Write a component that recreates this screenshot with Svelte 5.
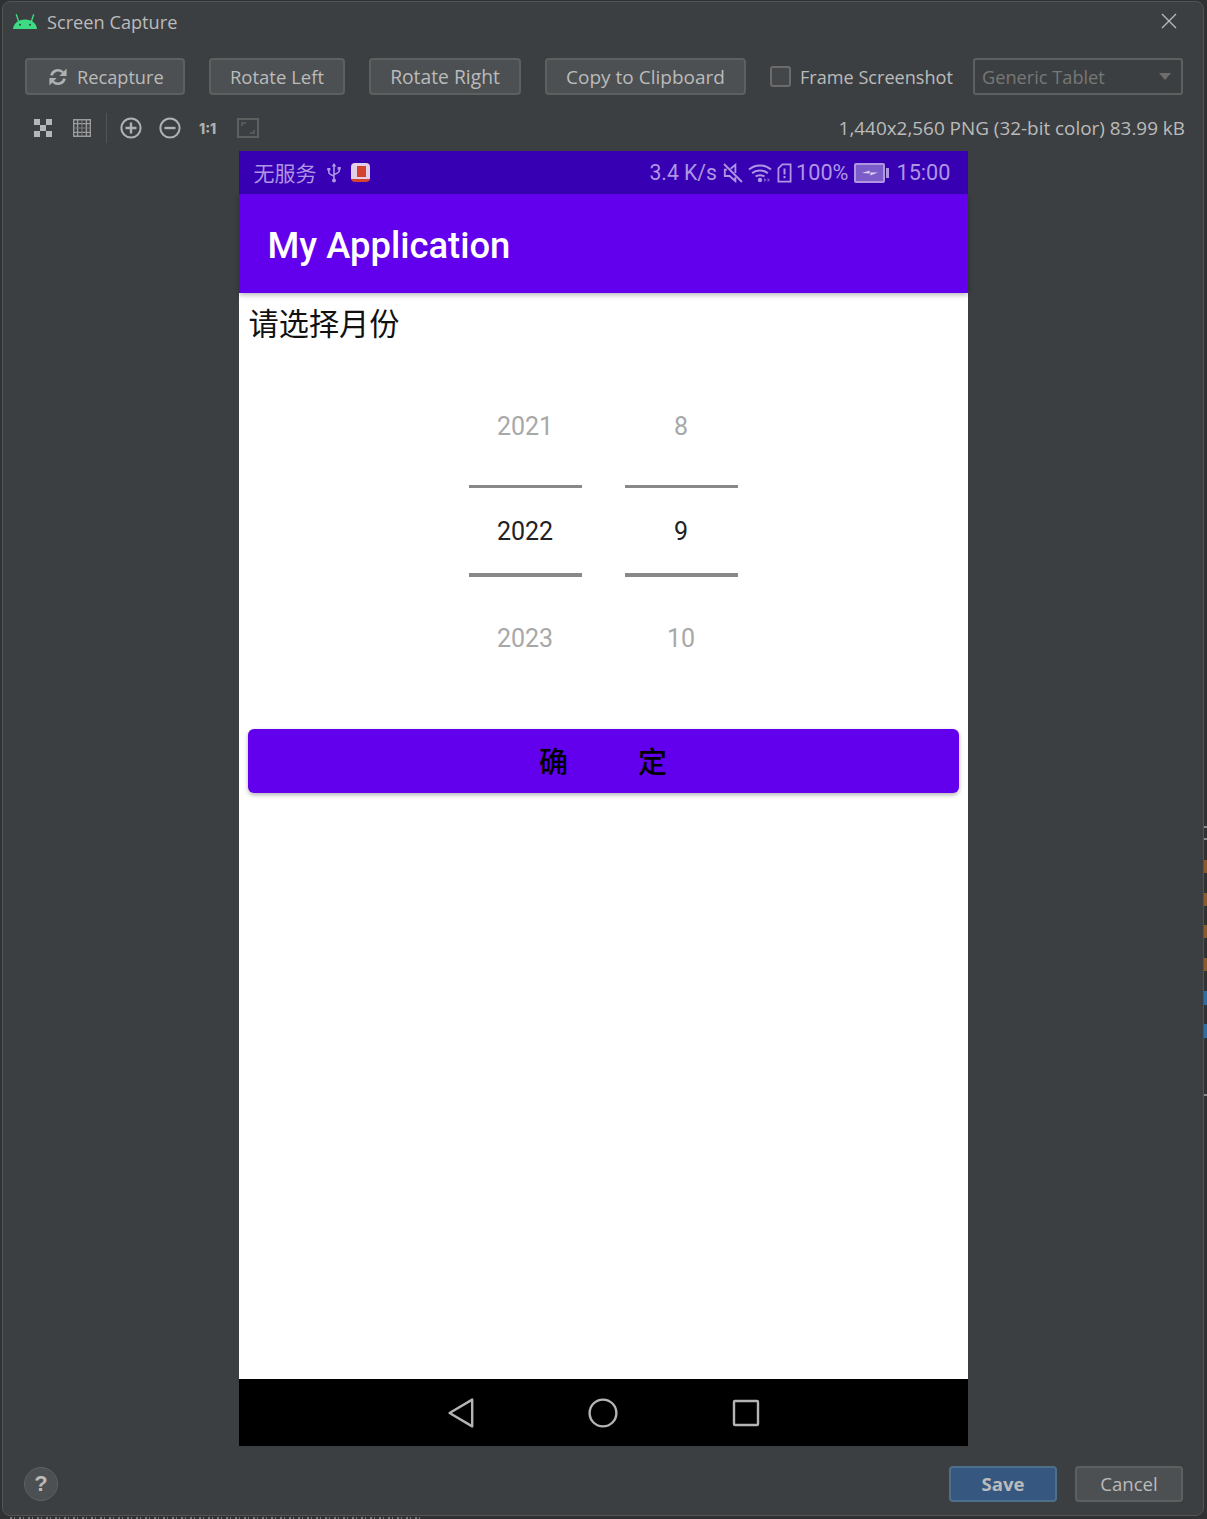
<script>
	const actions = [
		{ label: 'Rotate Left', cls: 'left' },
		{ label: 'Rotate Right', cls: 'right' },
		{ label: 'Copy to Clipboard', cls: 'copy' }
	];
	const years = ['2021', '2022', '2023'];
	const months = ['8', '9', '10'];
	const columns = [years, months];

	// bits of the windows behind the dialog that show along its right edge
	const edgeMarks = [
		{ top: 826, h: 2, color: '#8a8a8a' },
		{ top: 838, h: 2, color: '#8a8a8a' },
		{ top: 860, h: 13, color: '#8a5a2a' },
		{ top: 893, h: 13, color: '#8a5a2a' },
		{ top: 925, h: 13, color: '#8a5a2a' },
		{ top: 958, h: 13, color: '#8a5a2a' },
		{ top: 991, h: 14, color: '#2f6ea5' },
		{ top: 1024, h: 14, color: '#2f6ea5' },
		{ top: 1094, h: 2, color: '#8a8a8a' }
	];
</script>

<div class="desktop">
	<div class="dialog">
		<header class="titlebar">
			<svg class="android" viewBox="0 0 24 15" width="24" height="15" aria-hidden="true">
				<path fill="#3ddc84" d="M0 15C.4 9.6 5 5.4 12 5.4S23.6 9.6 24 15Z" />
				<path stroke="#3ddc84" stroke-width="1.4" stroke-linecap="round" d="M5.6 7.4 3.4.8M18.4 7.4 20.6.8" />
				<circle cx="7" cy="10.7" r="1" fill="#3c3f41" />
				<circle cx="17" cy="10.7" r="1" fill="#3c3f41" />
			</svg>
			<span class="title">Screen Capture</span>
			<svg class="close" viewBox="0 0 16 16" width="16" height="16" aria-hidden="true">
				<path stroke="#bbbbbb" stroke-width="1.3" d="M1 1 15 15M15 1 1 15" />
			</svg>
		</header>

		<div class="toolbar">
			<button type="button" class="btn recapture">
				<svg viewBox="0 0 20 20" width="20" height="20" aria-hidden="true">
					<path fill="none" stroke="#afb1b3" stroke-width="2.6" d="M3.4 8.4A6.9 6.9 0 0 1 15 5.4M16.6 11.6A6.9 6.9 0 0 1 5 14.6" />
					<path fill="#afb1b3" d="M18.6 1.6V9H11.4ZM1.4 18.4V11H8.6Z" />
				</svg>
				Recapture
			</button>
			{#each actions as action}
				<button type="button" class="btn {action.cls}">{action.label}</button>
			{/each}
			<span class="checkbox"></span>
			<span class="check-label">Frame Screenshot</span>
			<div class="select">
				<span>Generic Tablet</span>
				<i class="caret"></i>
			</div>
		</div>

		<div class="iconbar">
			<svg viewBox="0 0 18 18" width="18" height="18" aria-hidden="true">
				<path fill="#b4b6b8" d="M0 0H6V6H0ZM12 0H18V6H12ZM6 6H12V12H6ZM0 12H6V18H0ZM12 12H18V18H12Z" />
			</svg>
			<svg class="grid" viewBox="0 0 18 18" width="18" height="18" aria-hidden="true">
				<path fill="none" stroke="#9a9c9e" stroke-width="1.4" d="M.7.7H17.3V17.3H.7ZM.7 4.6H17.3M.7 13.4H17.3M4.6.7V17.3M13.4.7V17.3" />
				<path fill="none" stroke="#7c7e80" stroke-width="1" d="M.7 9H17.3M9 .7V17.3" />
			</svg>
			<span class="divider"></span>
			<svg viewBox="0 0 22 22" width="22" height="22" aria-hidden="true">
				<circle cx="11" cy="11" r="9.6" fill="none" stroke="#afb1b3" stroke-width="2" />
				<path stroke="#afb1b3" stroke-width="2.4" d="M5.5 11H16.5M11 5.5V16.5" />
			</svg>
			<svg viewBox="0 0 22 22" width="22" height="22" aria-hidden="true">
				<circle cx="11" cy="11" r="9.6" fill="none" stroke="#afb1b3" stroke-width="2" />
				<path stroke="#afb1b3" stroke-width="2.4" d="M5.5 11H16.5" />
			</svg>
			<span class="actual">1:1</span>
			<svg class="fit" viewBox="0 0 22 20" width="22" height="20" aria-hidden="true">
				<path fill="none" stroke="#5e6060" stroke-width="2" d="M1 1H21V19H1Z" />
				<path fill="none" stroke="#5e6060" stroke-width="1.4" d="M5 8V5H9M17 12V15H13" />
			</svg>
			<span class="info">1,440x2,560 PNG (32-bit color) 83.99 kB</span>
		</div>

		<div class="stage">
			<div class="phone">
				<div class="statusbar">
					<span class="carrier">无服务</span>
					<svg viewBox="0 0 14 20" width="14" height="20" aria-hidden="true">
						<path fill="none" stroke="#ae96e4" stroke-width="1.6" d="M7 2V18M1.8 7V9.5C1.8 11 3 11.5 7 13M12.2 6V8C12.2 9.5 11 10 7 11.5" />
						<path fill="#ae96e4" d="M7 0 9.4 3.4H4.6ZM.2 5H3.4V7.4H.2ZM10.6 4H13.8V6.4H10.6Z" />
						<circle cx="7" cy="17.6" r="2" fill="#ae96e4" />
					</svg>
					<span class="appicon"><i></i></span>
					<span class="spring"></span>
					<span class="speed">3.4 K/s</span>
					<svg class="mute" viewBox="0 0 20 20" width="20" height="20" aria-hidden="true">
						<path fill="none" stroke="#ae96e4" stroke-width="1.8" d="M1 1 19 19M12.4 10V1.8L7.6 5.8M11.4 14.6 12.4 15.6V18.2L6.6 13H1.8V6.6H4" />
					</svg>
					<svg class="wifi" viewBox="0 0 25 20" width="25" height="20" aria-hidden="true">
						<path fill="none" stroke="#ae96e4" stroke-width="2" d="M1 6.6C7 1 17 1 23 6.6M4.2 10.2C8.2 6.6 15.8 6.6 19.8 10.2M7.6 13.6C9.8 11.8 14.2 11.8 16.4 13.6" />
						<circle cx="12" cy="17" r="2.2" fill="#ae96e4" />
						<path fill="#7c5cc8" d="M16 15V19L18.6 17ZM19.6 15V19L22.2 17Z" />
					</svg>
					<svg class="sim" viewBox="0 0 15 20" width="15" height="20" aria-hidden="true">
						<path fill="none" stroke="#ae96e4" stroke-width="1.8" d="M5.4 1.4H13.6V18.6H1.4V5.4Z" />
						<path stroke="#ae96e4" stroke-width="2" d="M7.5 5.4V11.6M7.5 13V15.2" />
					</svg>
					<span class="pct">100%</span>
					<span class="battery">
						<svg viewBox="0 0 16 6" width="16" height="6" aria-hidden="true">
							<path fill="#e0d6f5" d="M0 3 8 .4 7 2.4H16L8 5.6 9 3.4Z" />
						</svg>
					</span>
					<span class="cap"></span>
					<span class="clock">15:00</span>
				</div>
				<div class="appbar">My Application</div>
				<div class="content">
					<div class="prompt">请选择月份</div>
					<div class="picker">
						{#each columns as col}
							<div class="wheel">
								<div class="cell dim top">{col[0]}</div>
								<div class="line"></div>
								<div class="cell current">{col[1]}</div>
								<div class="line thick"></div>
								<div class="cell dim bottom">{col[2]}</div>
							</div>
						{/each}
					</div>
					<div class="confirm"><span>确</span><span>定</span></div>
				</div>
				<div class="navbar">
					<svg viewBox="0 0 26 30" width="26" height="30" aria-hidden="true">
						<path fill="none" stroke="#b4b4b4" stroke-width="2.4" stroke-linejoin="round" d="M24.2 1.6V28.4L1.6 15Z" />
					</svg>
					<svg viewBox="0 0 30 30" width="30" height="30" aria-hidden="true">
						<circle cx="15" cy="15" r="13.4" fill="none" stroke="#b4b4b4" stroke-width="2.4" />
					</svg>
					<svg viewBox="0 0 28 28" width="28" height="28" aria-hidden="true">
						<rect x="2" y="2" width="24" height="24" rx="1" fill="none" stroke="#b4b4b4" stroke-width="2.4" />
					</svg>
				</div>
			</div>
		</div>

		<footer class="footer">
			<span class="help">?</span>
			<span class="spring"></span>
			<button type="button" class="btn wide primary">Save</button>
			<button type="button" class="btn wide">Cancel</button>
		</footer>
	</div>

	{#each edgeMarks as mark}
		<i class="edge-mark" style="top: {mark.top}px; height: {mark.h}px; background: {mark.color}"></i>
	{/each}
	<div class="behind-text"></div>
</div>

<style>
	:global(body) {
		margin: 0;
		background: #2b2b2b;
	}

	.desktop {
		position: relative;
		width: 1207px;
		height: 1519px;
		padding: 1px 3px 3px 2px;
		box-sizing: border-box;
		background: #2f3133;
		overflow: hidden;
	}

	.edge-mark {
		position: absolute;
		right: 0;
		width: 3px;
	}

	.behind-text {
		position: absolute;
		left: 10px;
		bottom: 0;
		width: 410px;
		height: 2px;
		background: repeating-linear-gradient(90deg, #77797b 0 2px, transparent 2px 4px, #77797b 4px 5px, transparent 5px 9px);
	}

	.dialog {
		height: 100%;
		box-sizing: border-box;
		display: flex;
		flex-direction: column;
		background: #3c3f41;
		border: 1px solid #515355;
		border-radius: 8px;
		font-family: "Open Sans", "Noto Sans", sans-serif;
		font-size: 18.6px;
		color: #bbbbbb;
	}

	.titlebar {
		height: 42px;
		flex: none;
		display: flex;
		align-items: center;
		padding: 0 26px 0 10px;
	}

	.android {
		margin-right: 10px;
		margin-top: -3px;
	}

	.title {
		flex: 1;
		margin-top: -2px;
		font-size: 18.2px;
	}

	.close {
		margin-top: -4px;
	}

	.toolbar {
		height: 37px;
		margin-top: 14px;
		flex: none;
		display: flex;
		align-items: center;
		padding-left: 22px;
	}

	.btn {
		height: 37px;
		box-sizing: border-box;
		display: inline-flex;
		align-items: center;
		justify-content: center;
		padding: 0;
		margin-right: 24px;
		background: #4c5052;
		border: 2px solid #5e6060;
		border-radius: 4px;
		color: #bbbbbb;
		font: inherit;
	}

	.recapture {
		width: 160px;
		justify-content: flex-start;
		gap: 9px;
		padding: 0 0 0 21px;
		font-size: 18.2px;
	}

	.left {
		width: 136px;
		font-size: 18.5px;
	}

	.right {
		width: 152px;
		font-size: 19.3px;
	}

	.copy {
		width: 201px;
		font-size: 19px;
	}

	.checkbox {
		width: 21px;
		height: 21px;
		box-sizing: border-box;
		background: #43474a;
		border: 2px solid #6b6b6b;
		border-radius: 3px;
		margin-right: 9px;
	}

	.check-label {
		width: 153px;
		margin-right: 20px;
		font-size: 18.1px;
		white-space: nowrap;
	}

	.select {
		width: 210px;
		height: 37px;
		box-sizing: border-box;
		display: flex;
		align-items: center;
		justify-content: space-between;
		padding: 0 10px 0 7px;
		border: 2px solid #5e6060;
		border-radius: 3px;
		color: #777777;
		font-size: 18.2px;
	}

	.caret {
		width: 0;
		height: 0;
		border-left: 6px solid transparent;
		border-right: 6px solid transparent;
		border-top: 7px solid #6e6e6e;
	}

	.iconbar {
		height: 30px;
		margin-top: 18px;
		flex: none;
		display: flex;
		align-items: center;
		padding: 0 18px 0 31px;
		gap: 17px;
	}

	.grid {
		margin-left: 4px;
	}

	.divider {
		width: 1px;
		height: 30px;
		background: #515355;
		margin: 0 -4px 0 -2px;
	}

	.actual {
		font-family: Inter, sans-serif;
		font-size: 14px;
		font-weight: 800;
		color: #afb1b3;
		width: 19px;
		margin: 0 2px 0 1px;
	}

	.info {
		margin-left: auto;
		font-size: 18.9px;
	}

	.stage {
		flex: none;
		display: flex;
		justify-content: center;
		margin-top: 8px;
	}

	.phone {
		width: 729px;
		height: 1295px;
		display: flex;
		flex-direction: column;
		background: #ffffff;
		font-family: Roboto, sans-serif;
	}

	.statusbar {
		height: 43px;
		flex: none;
		display: flex;
		align-items: center;
		padding: 0 17px 0 15px;
		background: #3700b3;
		color: #ae96e4;
		font-size: 21.2px;
	}

	.carrier {
		font-family: "Noto Sans CJK SC", sans-serif;
		font-size: 21px;
		margin: -2px 10px 0 0;
	}

	.appicon {
		width: 19px;
		height: 19px;
		margin-left: 10px;
		box-sizing: border-box;
		padding: 3px 4px 5px 6px;
		border-radius: 4px;
		background: linear-gradient(#e3cfe6 82%, #d4432f 82%);
		display: block;
	}

	.appicon i {
		display: block;
		height: 100%;
		background: #d4432f;
	}

	.spring {
		flex: 1;
	}

	.speed {
		margin-right: 6px;
	}

	.wifi {
		margin-left: 5px;
	}

	.sim {
		margin-left: 4px;
	}

	.pct {
		margin-left: 4px;
		font-size: 21.7px;
	}

	.battery {
		width: 31px;
		height: 20px;
		box-sizing: border-box;
		margin-left: 6px;
		display: flex;
		align-items: center;
		justify-content: center;
		background: #7c5cc8;
		border: 2px solid #ae96e4;
		border-radius: 2px;
	}

	.cap {
		width: 3px;
		height: 10px;
		margin-left: 1px;
		background: #ae96e4;
	}

	.clock {
		margin-left: 7px;
		font-size: 21.7px;
	}

	.appbar {
		height: 99px;
		flex: none;
		box-sizing: border-box;
		display: flex;
		align-items: center;
		padding: 4px 0 0 29px;
		background: #6200ee;
		color: #ffffff;
		font-size: 36.4px;
		font-weight: 500;
		box-shadow: 0 2px 5px rgba(0, 0, 0, 0.28);
		position: relative;
	}

	.content {
		flex: 1;
		display: flex;
		flex-direction: column;
		padding: 0 9px;
	}

	.prompt {
		height: 58px;
		line-height: 58px;
		padding-left: 1px;
		font-family: "Noto Sans CJK SC", sans-serif;
		font-size: 30.2px;
		color: #111111;
	}

	.picker {
		display: flex;
		justify-content: center;
		gap: 43px;
		margin-top: 34px;
	}

	.wheel {
		width: 113px;
		display: flex;
		flex-direction: column;
		align-items: stretch;
		font-size: 25px;
	}

	.cell {
		box-sizing: border-box;
		padding-top: 2px;
		display: flex;
		align-items: center;
		justify-content: center;
	}

	.dim {
		height: 80px;
		color: #a8a8a8;
	}

	.top {
		margin-bottom: 20px;
	}

	.bottom {
		margin-top: 20px;
	}

	.current {
		height: 85px;
		color: #222222;
	}

	.line {
		height: 3px;
		background: #888888;
	}

	.thick {
		height: 4px;
	}

	.confirm {
		height: 64px;
		box-sizing: border-box;
		padding-bottom: 2px;
		margin-top: 52px;
		flex: none;
		display: flex;
		align-items: center;
		justify-content: center;
		gap: 70px;
		background: #6200ee;
		border-radius: 6px;
		box-shadow: 0 2px 4px rgba(0, 0, 0, 0.3);
		font-family: "Noto Sans CJK SC", sans-serif;
		font-size: 29px;
		font-weight: 500;
		color: #000000;
	}

	.navbar {
		height: 67px;
		flex: none;
		box-sizing: border-box;
		display: flex;
		align-items: center;
		justify-content: center;
		gap: 114px;
		padding-left: 2px;
		background: #000000;
	}

	.footer {
		flex: 1;
		display: flex;
		align-items: center;
		padding: 6px 0 0 21px;
	}

	.help {
		width: 34px;
		height: 34px;
		box-sizing: border-box;
		display: flex;
		align-items: center;
		justify-content: center;
		border-radius: 50%;
		background: #4c5052;
		border: 1px solid #5e6060;
		font-family: "Liberation Sans", sans-serif;
		font-size: 22px;
		font-weight: 700;
	}

	.wide {
		width: 108px;
		height: 36px;
		margin: 0 20px 0 0;
	}

	.primary {
		margin-right: 18px;
		background: #365880;
		border-color: #4c708c;
		font-weight: 700;
	}
</style>
